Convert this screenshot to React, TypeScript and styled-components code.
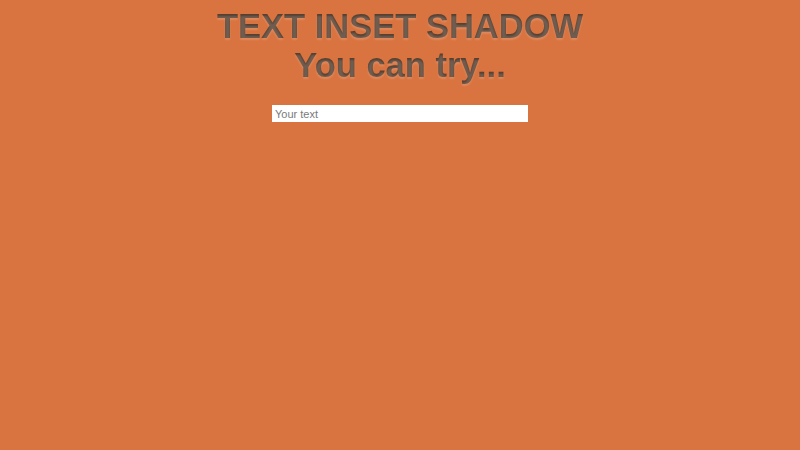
import styled, { createGlobalStyle } from 'styled-components';

const GlobalStyle = createGlobalStyle`
  html, body {
    margin: 0;
    padding: 0;
    height: 100%;
    background: #d9733f;
  }
  body {
    font-family: 'Liberation Sans', Arial, sans-serif;
  }
`;

const Page = styled.div`
  display: flex;
  flex-direction: column;
  align-items: center;
  padding-top: 7px;
`;

// inset lettering: dark fill clipped to the glyphs, light shadow pushed down over it
const Title = styled.h1`
  margin: 0;
  font-size: 34.5px;
  font-weight: 700;
  line-height: 39px;
  text-align: center;
  color: transparent;
  background-color: #553f30;
  -webkit-background-clip: text;
  background-clip: text;
  text-shadow: rgba(255, 255, 255, 0.16) 0px 2px 2px;
`;

const TextField = styled.input`
  margin-top: 20px;
  width: 256px;
  height: 17px;
  box-sizing: border-box;
  border: none;
  padding: 0 3px;
  font-family: 'Liberation Sans', Arial, sans-serif;
  font-size: 11px;
  color: #333;
  background: #fff;
  outline: none;

  &::placeholder {
    color: #7a7a7a;
  }
`;

const App = () => {
  return (
    <>
      <GlobalStyle />
      <Page>
        <Title>TEXT INSET SHADOW</Title>
        <Title>You can try...</Title>
        <TextField type="text" placeholder="Your text" />
      </Page>
    </>
  );
};

export default App;
